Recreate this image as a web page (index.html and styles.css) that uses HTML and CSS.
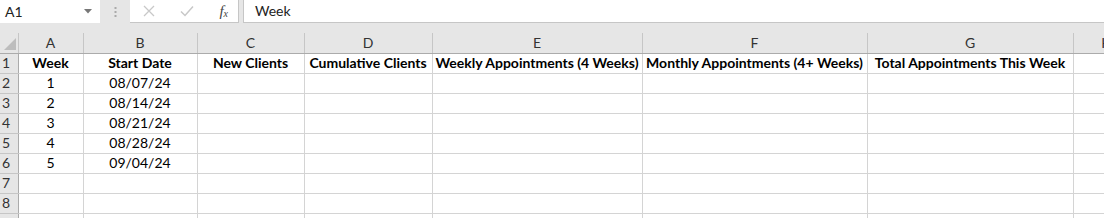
FILE: index.html
```html
<!DOCTYPE html>
<html lang="en">
<head>
    <meta charset="UTF-8">
    <title>Sheet1</title>
    <link rel="stylesheet" href="styles.css">
</head>
<body>
    <div class="formula-bar">
        <div class="name-box">
            <span>A1</span>
            <svg class="drop" width="8" height="5" viewBox="0 0 8 5"><path d="M0 0H8L4 4.5Z" fill="#777"/></svg>
        </div>
        <div class="grip">
            <svg width="3" height="10" viewBox="0 0 3 10"><rect x="0.5" y="0" width="2" height="2" fill="#aaa"/><rect x="0.5" y="4" width="2" height="2" fill="#aaa"/><rect x="0.5" y="8" width="2" height="2" fill="#aaa"/></svg>
        </div>
        <div class="fx-box">
            <svg width="12" height="12" viewBox="0 0 12 12"><path d="M1 1L11 11M11 1L1 11" stroke="#c8c8c8" stroke-width="1.3" fill="none"/></svg>
            <svg width="14" height="12" viewBox="0 0 14 12"><path d="M1 6.5L5 10.5L13 1.5" stroke="#c8c8c8" stroke-width="1.5" fill="none"/></svg>
            <span class="fx"><i>f</i><sub>x</sub></span>
        </div>
        <div class="formula-input">Week</div>
    </div>

    <table class="sheet">
        <colgroup>
            <col class="c-rh"><col class="c-a"><col class="c-b"><col class="c-c"><col class="c-d"><col class="c-e"><col class="c-f"><col class="c-g"><col class="c-h">
        </colgroup>
        <thead>
            <tr>
                <th class="corner"><svg width="12" height="12" viewBox="0 0 12 12"><path d="M12 0V12H0Z" fill="#bdbdbd"/></svg></th>
                <th>A</th><th>B</th><th>C</th><th>D</th><th>E</th><th>F</th><th>G</th><th>H</th>
            </tr>
        </thead>
        <tbody>
            <tr class="head-row">
                <th>1</th>
                <td>Week</td><td>Start Date</td><td>New Clients</td><td>Cumulative Clients</td>
                <td>Weekly Appointments (4 Weeks)</td><td>Monthly Appointments (4+ Weeks)</td><td>Total Appointments This Week</td><td></td>
            </tr>
            <tr><th>2</th><td>1</td><td>08/07/24</td><td></td><td></td><td></td><td></td><td></td><td></td></tr>
            <tr><th>3</th><td>2</td><td>08/14/24</td><td></td><td></td><td></td><td></td><td></td><td></td></tr>
            <tr><th>4</th><td>3</td><td>08/21/24</td><td></td><td></td><td></td><td></td><td></td><td></td></tr>
            <tr><th>5</th><td>4</td><td>08/28/24</td><td></td><td></td><td></td><td></td><td></td><td></td></tr>
            <tr><th>6</th><td>5</td><td>09/04/24</td><td></td><td></td><td></td><td></td><td></td><td></td></tr>
            <tr><th>7</th><td></td><td></td><td></td><td></td><td></td><td></td><td></td><td></td></tr>
            <tr><th>8</th><td></td><td></td><td></td><td></td><td></td><td></td><td></td><td></td></tr>
            <tr><th></th><td></td><td></td><td></td><td></td><td></td><td></td><td></td><td></td></tr>
        </tbody>
    </table>
</body>
</html>
```

FILE: styles.css
```css
body {
    margin: 0;
    background: #e6e6e6;
    font-family: Lato, "Liberation Sans", sans-serif;
    font-size: 14px;
    color: #000;
    overflow: hidden;
    height: 218px;
}
.formula-bar {
    display: flex;
    height: 24px;
    margin-bottom: 9px;
}
.name-box {
    width: 100px;
    height: 23px;
    background: #fff;
    display: flex;
    align-items: center;
    justify-content: space-between;
    padding: 0 8px 0 5px;
    box-sizing: border-box;
    color: #222;
}
.drop {
    margin-top: -1px;
}
.grip {
    width: 30px;
    display: flex;
    align-items: center;
    justify-content: center;
}
.fx-box {
    width: 109px;
    height: 23px;
    background: #fff;
    box-sizing: border-box;
    border-right: 1px solid #c6c6c6;
    border-bottom: 1px solid #c6c6c6;
    display: flex;
    align-items: center;
    justify-content: space-between;
    padding: 0 10px 0 13px;
}
.fx {
    font-family: "Liberation Serif", serif;
    font-size: 15px;
    color: #444;
}
.fx sub {
    font-size: 10px;
    font-style: italic;
    vertical-align: -1px;
}
.formula-input {
    flex: 1;
    margin-left: 4px;
    height: 23px;
    background: #fff;
    box-sizing: border-box;
    border-left: 1px solid #c6c6c6;
    border-bottom: 1px solid #c6c6c6;
    padding-left: 11px;
    line-height: 22px;
    color: #222;
}
.sheet {
    border-collapse: collapse;
    table-layout: fixed;
    width: 1140px;
    background: #fff;
}
.sheet tr {
    height: 20px;
}
.c-rh { width: 18px; }
.c-a { width: 65px; }
.c-b { width: 114px; }
.c-c { width: 107px; }
.c-d { width: 128px; }
.c-e { width: 210px; }
.c-f { width: 225px; }
.c-g { width: 206px; }
.c-h { width: 67px; }
.sheet th {
    background: #e6e6e6;
    font-weight: normal;
    color: #333;
    font-size: 14px;
    padding: 0;
    line-height: 16px;
}
.sheet thead th {
    border-right: 1px solid #c6c6c6;
    border-bottom: 1px solid #ababab;
    text-align: center;
}
.sheet thead th.corner {
    vertical-align: bottom;
    line-height: 0;
}
.corner svg {
    display: block;
    margin: 0 2px 3px auto;
}
.sheet tbody th {
    text-align: left;
    padding-left: 2px;
    border-right: 1px solid #ababab;
    border-bottom: 1px solid #c6c6c6;
}
.sheet td {
    padding: 0 2px;
    border-right: 1px solid #d4d4d4;
    border-bottom: 1px solid #d4d4d4;
    text-align: center;
    white-space: nowrap;
    overflow: hidden;
    line-height: 16px;
}
.head-row td {
    font-weight: bold;
}
```
